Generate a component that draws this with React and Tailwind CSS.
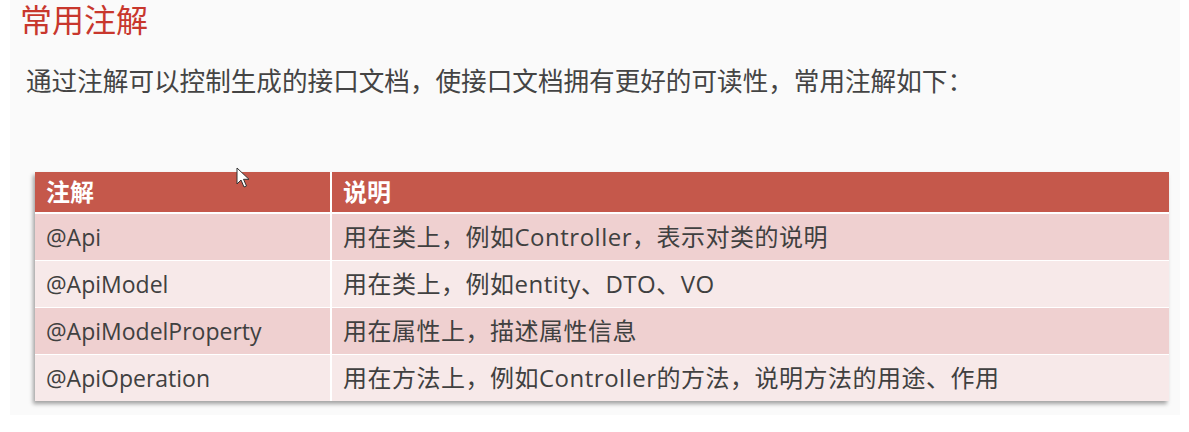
export default function App() {
  const rows = [
    ["@Api", "用在类上，例如Controller，表示对类的说明"],
    ["@ApiModel", "用在类上，例如entity、DTO、VO"],
    ["@ApiModelProperty", "用在属性上，描述属性信息"],
    ["@ApiOperation", "用在方法上，例如Controller的方法，说明方法的用途、作用"],
  ];
  const font = { fontFamily: '"Open Sans", "Noto Sans CJK SC", sans-serif' };
  return (
    <div className="w-[1189px] h-[432px] bg-white overflow-hidden" style={font}>
      <div className="relative ml-[10px] w-[1170px] h-[415px] bg-[#fafafa]">
        <h1 className="ml-[10px] text-[32px] leading-[40px] text-[#c8372d]">常用注解</h1>
        <p className="ml-[16px] mt-[24px] text-[25.6px] leading-[36px] text-[#444]">
          通过注解可以控制生成的接口文档，使接口文档拥有更好的可读性，常用注解如下：
        </p>
        <div className="ml-[25px] mt-[72px] w-[1134px] shadow-[-2px_3px_4px_rgba(0,0,0,0.35)] bg-white">
          <div className="grid grid-cols-[295px_1fr] gap-x-[2px]">
            <div className="h-[40px] bg-[#c5584b] text-white font-bold text-[24px] flex items-center pl-[11px]">注解</div>
            <div className="h-[40px] bg-[#c5584b] text-white font-bold text-[24px] flex items-center pl-[11px]">说明</div>
          </div>
          <div className="mt-[2px] flex flex-col gap-[1px]">
            {rows.map(([a, b], i) => {
              const bg = i % 2 === 0 ? "bg-[#efd0d0]" : "bg-[#f7e9e9]";
              return (
                <div key={a} className="grid grid-cols-[295px_1fr] gap-x-[2px]">
                  <div className={`${bg} h-[46px] flex items-center pl-[11px] text-[23px] text-[#404040]`}>{a}</div>
                  <div className={`${bg} h-[46px] flex items-center pl-[11px] text-[24px] tracking-[0.5px] text-[#404040]`}>{b}</div>
                </div>
              );
            })}
          </div>
        </div>
        <svg className="absolute left-[226px] top-[167px]" width="15" height="23" viewBox="0 0 15 23">
          <path d="M1 1 L1 17 L5 13 L8 20 L10.5 19 L7.5 12.3 L13 12.3 Z" fill="white" stroke="#333" strokeWidth="1" strokeLinejoin="round" />
        </svg>
      </div>
    </div>
  );
}
